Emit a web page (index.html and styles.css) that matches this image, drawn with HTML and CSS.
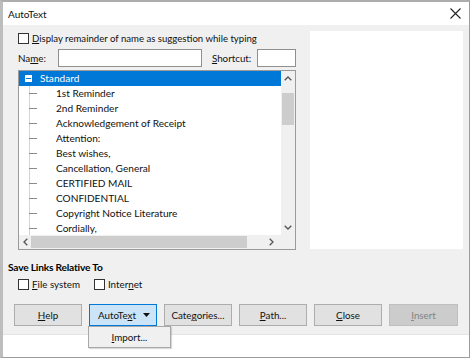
FILE: index.html
```html
<!DOCTYPE html>
<html>
<head>
<meta charset="utf-8">
<link rel="stylesheet" href="styles.css">
</head>
<body>
<div class="window">
  <div class="titlebar">
    <span class="title">AutoText</span>
    <svg class="close" width="11" height="11" viewBox="0 0 11 11"><path d="M0.5 0.5 L10.5 10.5 M10.5 0.5 L0.5 10.5" stroke="#222" stroke-width="1.1" fill="none"/></svg>
  </div>
  <div class="body">
    <div class="top">
      <div class="leftcol">
        <label class="check"><span class="box"></span><span><u>D</u>isplay remainder of name as suggestion while typing</span></label>
        <div class="namerow">
          <span class="lbl">Na<u>m</u>e:</span>
          <span class="input name"></span>
          <span class="lbl short"><u>S</u>hortcut:</span>
          <span class="input shortcut"></span>
        </div>
        <div class="tree">
          <div class="treemain">
            <div class="rows">
              <div class="row sel"><span class="minus"><span></span></span>Standard</div>
              <div class="row child">1st Reminder</div>
              <div class="row child">2nd Reminder</div>
              <div class="row child">Acknowledgement of Receipt</div>
              <div class="row child">Attention:</div>
              <div class="row child">Best wishes,</div>
              <div class="row child">Cancellation, General</div>
              <div class="row child">CERTIFIED MAIL</div>
              <div class="row child">CONFIDENTIAL</div>
              <div class="row child">Copyright Notice Literature</div>
              <div class="row child">Cordially,</div>
            </div>
            <div class="vbar">
              <div class="arrow"><svg width="8" height="5" viewBox="0 0 8 5"><path d="M0.7 4.3 L4 1 L7.3 4.3" stroke="#555" stroke-width="1.3" fill="none"/></svg></div>
              <div class="vtrack"><div class="vthumb"></div></div>
              <div class="arrow"><svg width="8" height="5" viewBox="0 0 8 5"><path d="M0.7 0.7 L4 4 L7.3 0.7" stroke="#555" stroke-width="1.3" fill="none"/></svg></div>
            </div>
          </div>
          <div class="hbarrow">
            <div class="hbar">
              <div class="harrow"><svg width="5" height="8" viewBox="0 0 5 8"><path d="M4.3 0.7 L1 4 L4.3 7.3" stroke="#555" stroke-width="1.3" fill="none"/></svg></div>
              <div class="hthumb"></div>
              <div class="htrack"></div>
              <div class="harrow"><svg width="5" height="8" viewBox="0 0 5 8"><path d="M0.7 0.7 L4 4 L0.7 7.3" stroke="#555" stroke-width="1.3" fill="none"/></svg></div>
            </div>
            <div class="corner"></div>
          </div>
        </div>
      </div>
      <div class="preview"></div>
    </div>
    <div class="section">Save Links Relative To</div>
    <div class="checks">
      <label class="check"><span class="box"></span><span><u>F</u>ile system</span></label>
      <label class="check"><span class="box"></span><span>Inter<u>n</u>et</span></label>
    </div>
    <div class="buttons">
      <div class="btn"><u>H</u>elp</div>
      <div class="btn active"><span>AutoTe<u>x</u>t</span><svg width="7" height="4" viewBox="0 0 7 4"><path d="M0 0 L7 0 L3.5 4 Z" fill="#111"/></svg></div>
      <div class="btn">Cate<u>g</u>ories...</div>
      <div class="btn"><u>P</u>ath...</div>
      <div class="btn"><u>C</u>lose</div>
      <div class="btn disabled"><u>I</u>nsert</div>
    </div>
  </div>
  <div class="footer"></div>
  <div class="menu"><span><u>I</u>mport...</span></div>
</div>
</body>
</html>
```
FILE: styles.css
```css
html, body {
  margin: 0;
  padding: 0;
  background: #ffffff;
}
body {
  width: 474px;
  height: 362px;
  overflow: hidden;
  font-family: Lato, "Noto Sans", sans-serif;
  font-size: 9.8px;
  color: #111;
}
u { text-decoration-thickness: 1px; text-underline-offset: 1px; }
.window {
  position: relative;
  width: 466px;
  border-top: 2px solid #adadad;
  border-left: 3px solid #bdbdbd;
  border-right: 1px solid #9c9c9c;
  border-bottom: 1px solid #9c9c9c;
  background: #fff;
}
.titlebar {
  height: 23px;
  display: flex;
  align-items: center;
  justify-content: space-between;
  padding: 0 8px 0 5px;
  background: #fff;
}
.title { font-size: 10px; }
.body {
  background: #f0f0f0;
  padding: 6px 6px 8px 5px;
  border-bottom: 1px solid #e4e4e4;
}
.top {
  display: flex;
  padding-left: 10px;
  gap: 14px;
}
.leftcol {
  width: 278px;
  display: flex;
  flex-direction: column;
}
.check {
  display: flex;
  align-items: center;
  gap: 3px;
  height: 14px;
  white-space: nowrap;
}
.leftcol > .check { font-size: 9.6px; }
.box {
  width: 9px;
  height: 9px;
  border: 1px solid #333;
  background: #fff;
  flex: none;
}
.namerow {
  margin-top: 4px;
  height: 18px;
  display: flex;
  align-items: center;
}
.input {
  height: 16px;
  border: 1px solid #8f8f8f;
  background: #fff;
  box-sizing: content-box;
}
.input.name { width: 142px; margin-left: 12px; }
.lbl.short { margin-left: 10px; }
.input.shortcut { width: 37px; margin-left: auto; }
.tree {
  margin-top: 3px;
  height: 178px;
  border: 1px solid #9a9a9a;
  background: #fff;
  display: flex;
  flex-direction: column;
}
.treemain {
  display: flex;
  height: 164px;
}
.rows {
  width: 262px;
  overflow: hidden;
  font-size: 10.1px;
}
.row {
  height: 15px;
  line-height: 15px;
  white-space: nowrap;
}
.row.sel {
  background: #0078d7;
  color: #fff;
  display: flex;
  align-items: center;
  padding-left: 6px;
}
.minus {
  width: 7px;
  height: 7px;
  background: #fff;
  margin-right: 8px;
  display: flex;
  align-items: center;
  justify-content: center;
}
.minus span {
  width: 5px;
  height: 1px;
  background: #0078d7;
}
.row.child {
  padding-left: 37px;
  background:
    linear-gradient(#8a8a8a, #8a8a8a) 10px 7px / 8px 1px no-repeat,
    linear-gradient(#d4d4d4, #d4d4d4) 10px 0 / 1px 100% no-repeat;
}
.vbar {
  width: 14px;
  background: #f0f0f0;
  display: flex;
  flex-direction: column;
}
.arrow {
  height: 15px;
  display: flex;
  align-items: center;
  justify-content: center;
}
.vtrack {
  flex: 1;
  padding-top: 7px;
}
.vthumb {
  margin: 0 1px;
  height: 32px;
  background: #cdcdcd;
}
.hbarrow {
  display: flex;
  height: 14px;
}
.hbar {
  width: 262px;
  background: #f0f0f0;
  display: flex;
}
.harrow {
  width: 12px;
  display: flex;
  align-items: center;
  justify-content: center;
}
.harrow:last-child { width: 20px; }
.hthumb {
  width: 216px;
  margin: 1px 0;
  background: #cdcdcd;
}
.htrack { flex: 1; }
.corner {
  width: 14px;
  background: #f0f0f0;
}
.preview {
  width: 153px;
  height: 218px;
  background: #fff;
}
.section {
  margin-top: 9px;
  height: 16px;
  line-height: 16px;
  font-weight: bold;
  font-size: 10.2px;
  letter-spacing: -0.2px;
  color: #000;
}
.checks {
  margin-top: 1px;
  height: 16px;
  display: flex;
  align-items: center;
  gap: 14px;
  padding-left: 10px;
}
.buttons {
  margin-top: 12px;
  display: flex;
  gap: 7px;
  padding-left: 6px;
}
.btn {
  width: 66px;
  height: 20px;
  border: 1px solid #adadad;
  background: #e1e1e1;
  display: flex;
  align-items: center;
  justify-content: center;
}
.btn.active {
  background: #cce4f7;
  border-color: #0078d7;
  justify-content: space-between;
  padding: 0 6px 0 8px;
  width: 52px;
}
.btn.disabled {
  background: #cccccc;
  border-color: #bfbfbf;
  color: #838383;
  width: 67px;
}
.footer {
  height: 22px;
  background: #fff;
}
.menu {
  position: absolute;
  left: 85px;
  top: 324px;
  width: 81px;
  height: 20px;
  background: #f0f0f0;
  border: 1px solid #a8a8a8;
  box-shadow: 1px 1px 1px rgba(0,0,0,0.15);
  display: flex;
  align-items: center;
  justify-content: center;
}
```
